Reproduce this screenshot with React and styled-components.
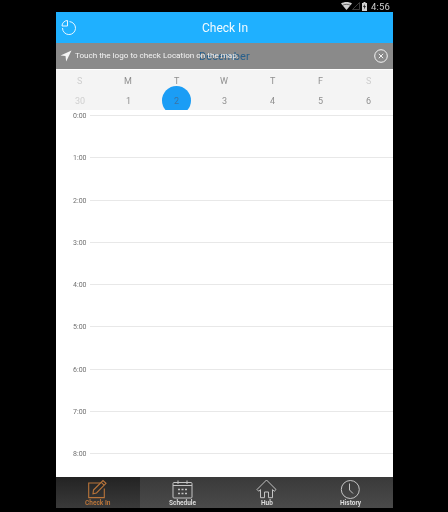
import React from "react";
import styled, { createGlobalStyle } from "styled-components";

const Global = createGlobalStyle`
  html, body { margin: 0; padding: 0; background: #000; }
  body { width: 448px; height: 512px; overflow: hidden; font-family: Roboto, "Liberation Sans", sans-serif; }
`;
const Screen = styled.div`
  width: 448px; height: 512px; background: #000; display: flex; flex-direction: column; align-items: center;
`;
const StatusBar = styled.div`
  width: 448px; height: 12px; display: flex; align-items: center; justify-content: flex-end;
  padding-right: 58px; box-sizing: border-box; color: #cfcfcf; font-size: 9.500px; letter-spacing: .15px;
`;
const StatusIcon = styled.svg` flex: none; margin-left: ${p => p.$gap || 0}px; `;
const Clock = styled.span` margin-left: 4px; will-change: transform; `;
const Phone = styled.div`
  width: 337px; height: 496px; margin-left: 1px; display: flex; flex-direction: column; background: #fff; position: relative;
`;
const Header = styled.div`
  height: 31px; background: #1fb0ff; display: flex; align-items: center; justify-content: center; position: relative;
  color: #f2fbff; font-size: 12px; flex: none;
`;
const Title = styled.span` will-change: transform; margin-left: 1px; `;
const Logo = styled.svg` position: absolute; left: 5px; top: 7px; `;
const Banner = styled.div`
  height: 26px; background: #8a8a8a; color: #f4f4f4; display: flex; align-items: center; padding: 0 5px 0 4px;
  font-size: 8.100px; gap: 3px; flex: none; position: relative; margin-bottom: 1px;
`;
const BannerText = styled.span`
  flex: 1; margin-top: -2px; white-space: nowrap; will-change: transform; position: relative; z-index: 1;
`;
const Month = styled.span`
  position: absolute; left: 143px; top: 7px; font-size: 11px; color: #28608c; letter-spacing: .1px; will-change: transform;
`;
const Calendar = styled.div`
  height: 40px; background: #f4f4f4; display: grid; grid-template-columns: repeat(7, 1fr); grid-template-rows: 21px 19px;
  overflow: hidden; flex: none;
`;
const Cell = styled.div`
  display: flex; align-items: center; justify-content: center; font-size: 9px; position: relative;
  color: ${p => (p.$muted ? "#cfcfcf" : "#8f8f8f")};
`;
const CellText = styled.span` will-change: transform; position: relative; `;
const Today = styled.span`
  width: 29px; height: 29px; border-radius: 50%; background: #1b9df5; position: absolute; top: -5px; left: 50%; margin-left: -14.500px;
`;
const TodayText = styled(CellText)` color: #3d74a3; `;
const Timeline = styled.div`
  flex: 1; background: #fff; padding-top: 5px; box-sizing: border-box; overflow: hidden;
`;
const Hour = styled.div`
  height: 42.3px; display: flex; align-items: flex-start; gap: 4px; padding-left: 17px;
`;
const HourLabel = styled.span`
  font-size: 7px; color: #6f6f6f; width: 13px; line-height: 1; margin-top: -2px; text-align: right; will-change: transform;
`;
const HourLine = styled.div` flex: 1; height: 1px; background: #e8e8e8; `;
const Nav = styled.div`
  height: 31px; flex: none; display: grid; grid-template-columns: repeat(4, 1fr);
  background: linear-gradient(#3a3a3a, #4a4a4a);
`;
const Tab = styled.div`
  display: flex; flex-direction: column; align-items: center; justify-content: flex-start;
  padding-top: 2px; line-height: 1;
  background: ${p => (p.$active ? "linear-gradient(#232323, #3a3a3a)" : "transparent")};
`;
const TabLabel = styled.span`
  font-size: 6.500px; font-weight: 700; will-change: transform;
  color: ${p => (p.$active ? "#b8743a" : "#dcdcdc")};
`;
const TabIcon = styled.svg` flex: none; `;

const days = [["S", 1], ["M"], ["T"], ["W"], ["T"], ["F"], ["S", 1]];
const dates = [["30", 1], ["1"], ["2"], ["3"], ["4"], ["5"], ["6"]];
const hours = ["0:00", "1:00", "2:00", "3:00", "4:00", "5:00", "6:00", "7:00", "8:00"];

const tabs = [
  { name: "Check In", active: true, icon: (
    <g fill="none" stroke="#b8743a" strokeWidth="1.100">
      <path d="M13.500 4H1.700v14.600h15.600V9.500" />
      <path d="M6.500 11 16 1.500l3 2.800L9.500 14 6 14.800z" />
      <path d="M14.200 3.300l3 2.800" />
    </g>) },
  { name: "Schedule", icon: (
    <g fill="none" stroke="#c4c4c4" strokeWidth="1">
      <rect x="2" y="3.500" width="19" height="15.500" rx="1" />
      <path d="M2 6.500h19M7 1.500v3.500M16 1.500v3.500" />
      <path d="M7 10.500h2M10.500 10.500h2M14 10.500h2M7 14.500h2M10.500 14.500h2M14 14.500h2" strokeWidth="1.500" />
    </g>) },
  { name: "Hub", icon: (
    <g fill="none" stroke="#c4c4c4" strokeWidth="1">
      <path d="M11.500 1 2 10.500l1.800 1.800 1.700-1.700v8.100h4V13h4v5.700h4v-8.100l1.700 1.700 1.800-1.800z" />
    </g>) },
  { name: "History", icon: (
    <g fill="none" stroke="#c4c4c4" strokeWidth="1">
      <circle cx="11.300" cy="10.500" r="9" />
      <path d="M10.500 4.500v6.500l3.500 3.500" />
    </g>) },
];

export default function App() {
  return (
    <Screen>
      <Global />
      <StatusBar>
        <StatusIcon width="11" height="8" viewBox="0 0 11 8">
          <path d="M0 1.500C3 -.500 8 -.500 11 1.500L5.500 8z" fill="#d0d0d0" />
          <path d="M1.500 3.300C4 2 7 2 9.500 3.300" fill="none" stroke="#000" strokeWidth=".5" />
        </StatusIcon>
        <StatusIcon width="8" height="8" viewBox="0 0 8 8">
          <path d="M.500 7.500 7.500.500v7z" fill="none" stroke="#4a4a4a" strokeWidth=".8" />
        </StatusIcon>
        <StatusIcon width="5" height="9" viewBox="0 0 5 9" $gap={2}>
          <path d="M1.500 0h2v1H5v8H0V1h1.500z" fill="#d0d0d0" />
          <path d="M2.800 2 1 5h1.200l-.3 2.500L4 4H2.700z" fill="#222" />
        </StatusIcon>
        <Clock>4:56</Clock>
      </StatusBar>
      <Phone>
        <Header>
          <Logo width="16" height="16" viewBox="0 0 16 16" fill="none" stroke="#e8f7ff" strokeWidth="1">
            <path d="M8.500 2.600A6.500 6.500 0 1 1 1.500 9" />
            <path d="M1 7A5.600 5.600 0 0 1 6.500 1.500V7z" />
          </Logo>
          <Title>Check In</Title>
        </Header>
        <Banner>
          <svg width="12" height="12" viewBox="0 0 12 12">
            <path d="M11.500.500 .500 5.500l5 .5.700 5.500z" fill="#f4f4f4" />
          </svg>
          <BannerText>Touch the logo to check Location on the map.</BannerText>
          <Month>December</Month>
          <svg width="14" height="14" viewBox="0 0 14 14" fill="none" stroke="#f4f4f4">
            <circle cx="7" cy="7" r="6.300" strokeWidth="1" />
            <path d="M4.800 4.800l4.400 4.400M9.200 4.800l-4.400 4.400" strokeWidth="1" />
          </svg>
        </Banner>
        <Calendar>
          {days.map(([d, m], i) => <Cell key={i} $muted={m}><CellText>{d}</CellText></Cell>)}
          {dates.map(([d, m], i) => (
            <Cell key={i} $muted={m}>
              {d === "2" ? <><Today /><TodayText>{d}</TodayText></> : <CellText>{d}</CellText>}
            </Cell>
          ))}
        </Calendar>
        <Timeline>
          {hours.map(h => (
            <Hour key={h}>
              <HourLabel>{h}</HourLabel>
              <HourLine />
            </Hour>
          ))}
        </Timeline>
        <Nav>
          {tabs.map(t => (
            <Tab key={t.name} $active={t.active}>
              <TabIcon width="23" height="21" viewBox="0 0 23 21">{t.icon}</TabIcon>
              <TabLabel $active={t.active}>{t.name}</TabLabel>
            </Tab>
          ))}
        </Nav>
      </Phone>
    </Screen>
  );
}
